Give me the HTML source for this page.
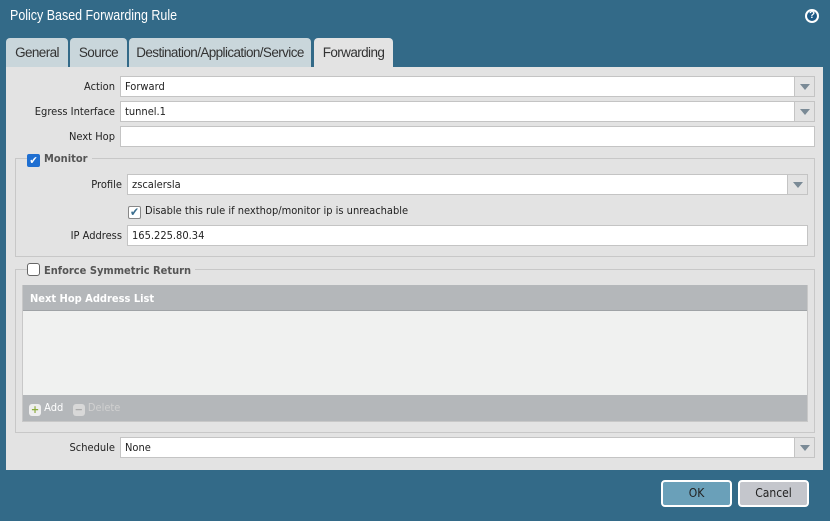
<!DOCTYPE html>
<html><head><style>
*{box-sizing:border-box;margin:0;padding:0}
body{width:830px;height:521px;background:#336a88;font-family:"DejaVu Sans Condensed","Liberation Sans",sans-serif;font-size:11px;color:#222;position:relative;overflow:hidden}
.a{position:absolute}
.title{left:10px;top:8px;color:#fff;font-family:"Liberation Sans",sans-serif;font-size:14.5px;transform:scaleX(0.86);transform-origin:left top;white-space:nowrap}
.tab{top:38px;height:30px;background:#c9d6db;border-radius:4px 4px 0 0;color:#333;text-align:center;line-height:29px;font-family:"Liberation Sans",sans-serif;font-size:13.5px;letter-spacing:-0.6px;white-space:nowrap}
.panel{left:6px;top:67px;width:817px;height:403px;background:#e3e3e3}
.lbl{text-align:right;font-size:11px}
.f{background:#fff;border:1px solid #c4c4c4;height:21px;padding-left:4px;line-height:19px;font-size:11px}
.dd{position:absolute;right:0;top:0;width:20px;height:19px;background:#e3e3e3;border-left:1px solid #c4c4c4}
.dd:after{content:"";position:absolute;left:5px;top:7px;border-left:5px solid transparent;border-right:5px solid transparent;border-top:6px solid #7a8a96}
.fs{border:1px solid #c8c8c8}
.leg{background:#e3e3e3;font-weight:bold;color:#555;padding:0 4px 0 0;font-size:11px}
.cb{display:inline-block;width:13px;height:13px;border-radius:2px;vertical-align:-2px;margin-right:4px}
.btn{top:480px;height:27px;border:2px solid #fff;border-radius:4px;text-align:center;line-height:23px;font-size:12px;color:#222}
</style></head><body>
<div class="a title">Policy Based Forwarding Rule</div>
<div class="a" style="left:805px;top:9px;width:14px;height:14px;border-radius:50%;background:#1d5a86;border:2px solid #fff;color:#fff;font-size:10px;font-weight:bold;text-align:center;line-height:10px;font-family:'Liberation Sans',sans-serif">?</div>
<div class="a tab" style="left:6px;width:62px">General</div>
<div class="a tab" style="left:70px;width:57px">Source</div>
<div class="a tab" style="left:129px;width:182px">Destination/Application/Service</div>
<div class="a tab" style="left:314px;width:79px;background:#e3e3e3">Forwarding</div>
<div class="a panel"></div>

<div class="a lbl" style="left:20px;top:80px;width:95px">Action</div>
<div class="a f" style="left:120px;top:76px;width:695px">Forward<span class="dd"></span></div>
<div class="a lbl" style="left:20px;top:105px;width:95px">Egress Interface</div>
<div class="a f" style="left:120px;top:101px;width:695px">tunnel.1<span class="dd"></span></div>
<div class="a lbl" style="left:20px;top:130px;width:95px">Next Hop</div>
<div class="a f" style="left:120px;top:126px;width:695px"></div>

<div class="a fs" style="left:15px;top:158px;width:800px;height:99px"></div>
<div class="a leg" style="left:27px;top:152px"><span class="cb" style="background:#1f6fd1;color:#fff;font-size:11px;line-height:13px;text-align:center">✔</span>Monitor</div>
<div class="a lbl" style="left:20px;top:178px;width:102px">Profile</div>
<div class="a f" style="left:127px;top:174px;width:681px">zscalersla<span class="dd"></span></div>
<div class="a" style="left:128px;top:204px"><span class="cb" style="background:#fff;border:1px solid #888;color:#3b6e8e;font-size:12px;line-height:11px;text-align:center">✔</span>Disable this rule if nexthop/monitor ip is unreachable</div>
<div class="a lbl" style="left:20px;top:229px;width:102px">IP Address</div>
<div class="a f" style="left:127px;top:225px;width:681px">165.225.80.34</div>

<div class="a fs" style="left:15px;top:269px;width:800px;height:164px"></div>
<div class="a leg" style="left:27px;top:263px"><span class="cb" style="background:#fff;border:1px solid #666;border-radius:3px"></span>Enforce Symmetric Return</div>
<div class="a" style="left:22px;top:285px;width:786px;height:137px;background:#f0f1f0;border:1px solid #c8c8c8"></div>
<div class="a" style="left:23px;top:285px;width:784px;height:26px;background:#b4b7ba;color:#fff;font-weight:bold;padding:7px 0 0 7px;border-bottom:1px solid #9fa3a6">Next Hop Address List</div>
<div class="a" style="left:23px;top:395px;width:784px;height:26px;background:#b4b7ba;color:#fff;padding:6px 0 0 6px;font-size:11px">
<span style="display:inline-block;width:12px;height:12px;background:#eee;border-radius:3px;color:#8aaa3c;font-weight:bold;text-align:center;line-height:12px;vertical-align:-2px">+</span> Add &nbsp;
<span style="display:inline-block;width:12px;height:12px;background:#d8d8d8;border-radius:3px;color:#aaa;font-weight:bold;text-align:center;line-height:11px;vertical-align:-2px">−</span> <span style="color:#d0d0d0">Delete</span></div>

<div class="a lbl" style="left:20px;top:441px;width:95px">Schedule</div>
<div class="a f" style="left:120px;top:437px;width:695px">None<span class="dd"></span></div>

<div class="a btn" style="left:661px;width:71px;background:#6aa0b9">OK</div>
<div class="a btn" style="left:738px;width:71px;background:#c4c6cc">Cancel</div>
</body></html>
